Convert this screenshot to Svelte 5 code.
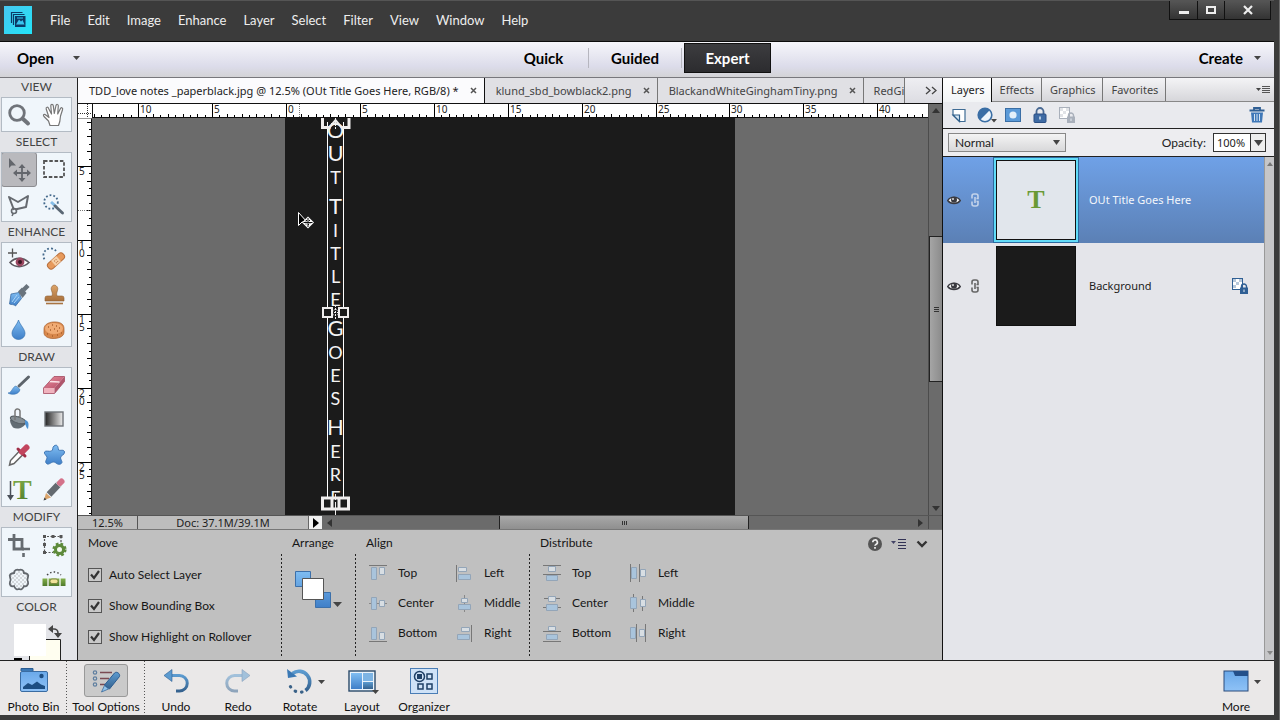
<script>
  const menus = ['File', 'Edit', 'Image', 'Enhance', 'Layer', 'Select', 'Filter', 'View', 'Window', 'Help'];

  const toolGroups = [
    { name: 'VIEW', tools: ['zoom', 'hand'] },
    { name: 'SELECT', tools: ['move', 'marquee', 'lasso', 'wand'] },
    { name: 'ENHANCE', tools: ['redeye', 'heal', 'smart', 'stamp', 'blur', 'sponge'] },
    { name: 'DRAW', tools: ['brush', 'eraser', 'bucket', 'gradient', 'dropper', 'shape', 'type', 'pencil'] },
    { name: 'MODIFY', tools: ['crop', 'recompose', 'cookie', 'straighten'] }
  ];
  let activeTool = $state('move');

  const tabs = [
    'TDD_love notes _paperblack.jpg @ 12.5% (OUt Title Goes Here, RGB/8) *',
    'klund_sbd_bowblack2.png',
    'BlackandWhiteGinghamTiny.png'
  ];
  const panelTabs = ['Layers', 'Effects', 'Graphics', 'Favorites'];

  // Rulers: one tick per half unit, a long one with a label every five units.
  const step = 7.39;
  const originX = 193;
  const originY = -27;
  const hTicks = [];
  for (let i = -26; i <= 300; i++) hTicks.push({ i, p: Math.round(originX + i * step) });
  const vTicks = [];
  for (let i = 4; i <= 200; i++) vTicks.push({ i, p: Math.round(originY + i * step) });
  const hLabels = hTicks.filter((t) => t.i % 10 === 0 && t.i > -26);
  const vLabels = vTicks.filter((t) => t.i % 10 === 0);

  // Title runs down the page; capitals are larger than the small capitals.
  const letters = [];
  let baseline = 20;
  for (const ch of 'OUt Title Goes Here') {
    if (ch === ' ') {
      baseline += 7;
      continue;
    }
    letters.push({ ch: ch.toUpperCase(), y: baseline, big: ch !== ch.toLowerCase() });
    baseline += 23;
  }

  const checks = ['Auto Select Layer', 'Show Bounding Box', 'Show Highlight on Rollover'];
  const align = [
    ['Top', 'a-top'], ['Left', 'a-left'],
    ['Center', 'a-center'], ['Middle', 'a-middle'],
    ['Bottom', 'a-bottom'], ['Right', 'a-right']
  ];
  const distribute = [
    ['Top', 'd-top'], ['Left', 'd-left'],
    ['Center', 'd-center'], ['Middle', 'd-middle'],
    ['Bottom', 'd-bottom'], ['Right', 'd-right']
  ];
</script>

<svg class="defs" aria-hidden="true">
  <defs>
    <linearGradient id="blue" x1="0" y1="0" x2="0" y2="1"><stop offset="0" stop-color="#7fbdf2" /><stop offset="1" stop-color="#3f7fc8" /></linearGradient>
    <linearGradient id="sky" x1="0" y1="0" x2="0" y2="1"><stop offset="0" stop-color="#6aa9ea" /><stop offset="1" stop-color="#8fc2f6" /></linearGradient>
    <linearGradient id="steel" x1="0" y1="0" x2="0" y2="1"><stop offset="0" stop-color="#5c9bd0" /><stop offset="1" stop-color="#35628f" /></linearGradient>
    <linearGradient id="fade" x1="0" y1="0" x2="1" y2="0"><stop offset="0" stop-color="#222" /><stop offset="1" stop-color="#eee" /></linearGradient>
    <linearGradient id="tan" x1="0" y1="0" x2="0" y2="1"><stop offset="0" stop-color="#dda468" /><stop offset="1" stop-color="#a8703c" /></linearGradient>
    <linearGradient id="pink" x1="0" y1="0" x2="1" y2="1"><stop offset="0" stop-color="#e68c9c" /><stop offset="1" stop-color="#b84f68" /></linearGradient>
    <linearGradient id="green" x1="0" y1="0" x2="0" y2="1"><stop offset="0" stop-color="#83b04a" /><stop offset="1" stop-color="#4f7a2c" /></linearGradient>
    <linearGradient id="logo" x1="0" y1="0" x2="1" y2="1"><stop offset="0" stop-color="#48c8f0" /><stop offset="1" stop-color="#22e4f8" /></linearGradient>
    <pattern id="checker" width="4" height="4" patternUnits="userSpaceOnUse"><path d="M0 0h2v2h-2zM2 2h2v2h-2z" fill="#d4d8dc" /></pattern>
  </defs>
</svg>

{#snippet toolIcon(name)}
  <svg width="26" height="26" viewBox="0 0 26 26" fill="none" aria-hidden="true">
    {#if name === 'zoom'}
      <circle cx="11" cy="11" r="7.300" stroke="#70747a" stroke-width="2.800" />
      <path d="M16.500 16.500L22 21.500" stroke="#70747a" stroke-width="4" stroke-linecap="round" />
    {:else if name === 'hand'}
      <path d="M9 23.500L7.500 19L3 14.500C1.500 12.500 3.500 11.800 4.800 13L8 15.500L5.200 7C4.800 5 7 4.500 7.600 6.500L10.500 12L9.800 3.800C9.800 1.800 12 1.800 12.300 3.800L13.300 11.500L15 3.500C15.500 1.800 17.500 2.300 17.300 4L16.700 12L19.500 6.500C20.500 5 22.200 6 21.500 7.800L19.500 14L18.800 19.500L17.500 23.500Z" fill="#fff" stroke="#777" stroke-width="1.200" stroke-linejoin="round" />
    {:else if name === 'move'}
      <path d="M3 1v10l2.500-2.500 4.500 0z" fill="#63666c" />
      <path d="M16 9v14M9 16h14" stroke="#63666c" stroke-width="1.800" />
      <path d="M16 7l3.500 4h-7zM16 25l3.500-4h-7zM7 16l4-3.500v7zM25 16l-4-3.500v7z" fill="#63666c" />
    {:else if name === 'marquee'}
      <rect x="3" y="4" width="20" height="16" stroke="#555" stroke-width="1.800" stroke-dasharray="3.500 1.800" />
    {:else if name === 'lasso'}
      <path d="M8 18L3 5l9 5 10-6-2 11-11 2.500" stroke="#666a70" stroke-width="2" stroke-linejoin="round" />
      <circle cx="8" cy="19" r="2.500" stroke="#666a70" stroke-width="1.600" />
      <path d="M7.500 21l-1.500 3" stroke="#666a70" stroke-width="1.600" />
    {:else if name === 'wand'}
      <circle cx="10" cy="10" r="6.800" stroke="#44698c" stroke-width="1.800" stroke-dasharray="1.800 2" />
      <path d="M10 10L15 14.500" stroke="#85bde8" stroke-width="3" />
      <path d="M14 14L21.500 21" stroke="#5a6774" stroke-width="3" stroke-linecap="round" />
    {:else if name === 'redeye'}
      <path d="M2 6h9M6.500 1.500v9" stroke="#555" stroke-width="1.300" />
      <path d="M4 15.500C9 10 17 10 23 15.500C17 21 9 21 4 15.500z" fill="#fff" stroke="#5d5a60" stroke-width="1.600" />
      <circle cx="14" cy="15" r="4.400" fill="#9a4761" /><circle cx="14" cy="15" r="2" fill="#3b1824" />
    {:else if name === 'heal'}
      <path d="M15 4A7 7 0 1 0 4 13" stroke="#44698c" stroke-width="1.800" stroke-dasharray="1.800 2" />
      <g transform="rotate(-42 15 14)"><rect x="5" y="10.500" width="20" height="7" rx="3" fill="#e79a5c" stroke="#b86f3c" /><rect x="11.500" y="10.500" width="7" height="7" fill="#f6cfa6" /><path d="M13.500 13h3M13.500 15.500h3" stroke="#b86f3c" stroke-dasharray="1 1" /></g>
    {:else if name === 'smart'}
      <path d="M5 12L13 10.500L15.500 16.500L9.500 24C8 22 5.500 23 3.500 22z" fill="url(#blue)" stroke="#2f6299" stroke-width=".7" />
      <path d="M6 20l5-7M8 21l5-6" stroke="#a9d3f6" />
      <path d="M12 9.500L16 5.500L20.500 11L16.500 16z" fill="#69737c" /><path d="M17.500 8L22 3.500" stroke="#69737c" stroke-width="4.500" />
    {:else if name === 'stamp'}
      <path d="M13 3a4 4 0 0 1 3.500 5.500C15.500 11 15.500 12 16 14H21a2 2 0 0 1 2 2v3H4v-3a2 2 0 0 1 2-2h5c.5-2 .5-3-.5-5.500A4 4 0 0 1 13 3z" fill="url(#tan)" stroke="#8f6034" stroke-width=".6" /><path d="M5 21.500h17" stroke="#a87442" stroke-width="1.600" />
    {:else if name === 'blur'}
      <path d="M12.500 3C14 8 19 12 19 16.500a6.500 6 0 0 1-13 0C6 12 11 8 12.500 3z" fill="url(#blue)" stroke="#3773b0" stroke-width=".7" />
    {:else if name === 'sponge'}
      <path d="M3 12C3 7 9 4.500 15 5s8 3 8 7v3c0 5-6 6.500-11 6.500S3 19 3 16z" fill="#d8884c" stroke="#a9602e" stroke-width=".7" />
      <ellipse cx="13" cy="11.500" rx="9" ry="5.500" fill="#f0ab74" /><path d="M7 10h1M11 8h1M15 9h1M18 11h1M9 13h1M13 12h1M16 14h1M6 17h1M11 19h1M16 18h1M20 16h1" stroke="#a9602e" stroke-width="1.400" />
    {:else if name === 'brush'}
      <path d="M13 14L22.500 5" stroke="#5d646b" stroke-width="3" stroke-linecap="round" />
      <path d="M2 21c4 0 4-6 8-7l4 3.500c-1 5-8 6-12 3.500z" fill="url(#blue)" stroke="#3773b0" stroke-width=".6" />
    {:else if name === 'eraser'}
      <path d="M2.500 16L13 4.500h10.500L13.500 16z" fill="url(#pink)" /><path d="M2.500 16h11v5.500h-11z" fill="#f0b3be" /><path d="M13.500 16l10-11.500v5L13.500 21.500z" fill="#b0566c" /><path d="M8.500 9.500l10 .5" stroke="#fbe3e7" stroke-width="1.600" /><path d="M2.500 16L13 4.500h10.500v5L13.500 21.500h-11z" stroke="#a34b61" stroke-width=".8" />
    {:else if name === 'bucket'}
      <path d="M4 13L13 9L20 16C18 21 11 23 7 20.500C5 18 4 15 4 13z" fill="#626c73" /><ellipse cx="12" cy="13" rx="8" ry="3" transform="rotate(18 12 13)" fill="#858e94" stroke="#555d63" />
      <path d="M9 13V5a2.500 2.500 0 0 1 5-1v7" stroke="#777" stroke-width="1.500" /><path d="M19 13c4 1 4 4 3 9-2-1-2-4-3-5z" fill="#4f93d2" />
    {:else if name === 'gradient'}
      <rect x="4" y="5" width="18" height="14" fill="url(#fade)" stroke="#6e7378" stroke-width="1.400" />
    {:else if name === 'dropper'}
      <path d="M13.500 9L4.500 18.500L3.500 23L8 21.500L17 12.500z" fill="#fff" stroke="#666" stroke-width="1.500" />
      <path d="M12 7L19 14" stroke="#a02f47" stroke-width="3" stroke-linecap="round" /><path d="M16 10L20.500 5.500" stroke="#c2455e" stroke-width="6" stroke-linecap="round" />
    {:else if name === 'shape'}
      <path d="M13 4c3-2 4 0 4.500 4 2 1 5.500-1 6 2s-4.500 3.500-4 6 3 4.500 0 6-4.500-2-7-2-5 3.500-7 1.500.5-4 .5-6-3.500-3.500-2.500-5.500 5 0 7-1 .5-3.500 2.500-5z" fill="url(#blue)" stroke="#4076b4" />
    {:else if name === 'type'}
      <path d="M4.500 4v16" stroke="#4a4f58" stroke-width="1.500" /><path d="M1 18l3.500 5.500L8 18z" fill="#4a4f58" />
      <text x="7" y="22" class="glyph" fill="url(#green)" font-size="28">T</text>
    {:else if name === 'pencil'}
      <path d="M3 23l2-7 5 4.500z" fill="#dba56c" /><path d="M2.500 23.500l1-3 2 2z" fill="#444" /><path d="M8 17.500L17 8" stroke="#646a70" stroke-width="6.500" /><path d="M17 8l1.500-1.500" stroke="#b7bcc0" stroke-width="6.500" /><path d="M19 6l1.500-1.500" stroke="#d4728a" stroke-width="6" stroke-linecap="round" />
    {:else if name === 'crop'}
      <path d="M8 2v15h10M2 7.500h14v10" stroke="#666b70" stroke-width="2.800" /><path d="M16 17h8M17.500 21v4" stroke="#666b70" stroke-width="2.600" />
    {:else if name === 'recompose'}
      <path d="M20 10V4.500H3.500v16H12" stroke="#555" stroke-width="1.200" stroke-dasharray="2 1.500" /><path d="M2 3h3v3H2zM10.500 3h3v3h-3zM18.500 3h3v3h-3zM2 11h3v3H2zM2 19h3v3H2z" fill="#555" />
      <circle cx="18.500" cy="17.500" r="5.800" stroke="#5d8a3a" stroke-width="2.600" stroke-dasharray="2.600 2" /><circle cx="18.500" cy="17.500" r="4" fill="#f4faf0" stroke="#5d8a3a" stroke-width="3" />
    {:else if name === 'cookie'}
      <path d="M13 3c2-1 5 0 5 3 3 0 5 2 4 4-1 2-1 3 0 5 1 3-2 5-4 4-1 3-3 4-5 3-2 1-4 0-5-3-3 1-5-1-4-4 1-2 1-3 0-5-1-2 1-4 4-4 0-3 3-4 5-3z" fill="url(#checker)" stroke="#62676d" stroke-width="1.800" />
    {:else if name === 'straighten'}
      <path d="M6 8q7-6 14 0" stroke="#444" stroke-width="1.500" stroke-dasharray="1.500 2.200" />
      <rect x="1.500" y="11.500" width="23" height="7.500" fill="url(#green)" /><path d="M7 11v8M19 11v8" stroke="#eef3ea" stroke-width="1.400" /><rect x="9" y="12" width="8" height="4.500" rx="2" fill="#f2e39a" stroke="#7d8a3f" />
    {/if}
  </svg>
{/snippet}

{#snippet alignIcon(name)}
  <svg width="20" height="20" viewBox="0 0 20 20" fill="#a9c4dc" stroke="#93a5b8" aria-hidden="true">
    {#if name === 'a-top'}
      <path d="M1 2.500h18" stroke="#777" /><path d="M3.500 4.500h5v12h-5z" /><path d="M11.500 4.500h5v7h-5z" fill="#d8dee3" />
    {:else if name === 'a-center'}
      <path d="M1 10.500h18" stroke="#888" /><path d="M3.500 4.500h5v12h-5z" /><path d="M11.500 7.500h5v6h-5z" fill="#d8dee3" />
    {:else if name === 'a-bottom'}
      <path d="M1 18.500h18" stroke="#777" /><path d="M3.500 4.500h5v12h-5z" /><path d="M11.500 9.500h5v7h-5z" fill="#d8dee3" />
    {:else if name === 'a-left'}
      <path d="M2.500 2v17" stroke="#777" /><path d="M4.500 11.500h12v5h-12z" /><path d="M4.500 4.500h8v4h-8z" fill="#d8dee3" />
    {:else if name === 'a-middle'}
      <path d="M10.500 2v17" stroke="#888" /><path d="M4.500 11.500h12v5h-12z" /><path d="M7.500 5.500h6v4h-6z" fill="#d8dee3" />
    {:else if name === 'a-right'}
      <path d="M17.500 2v17" stroke="#777" /><path d="M3.500 11.500h12v5h-12z" /><path d="M7.500 4.500h8v4h-8z" fill="#d8dee3" />
    {:else if name === 'd-top'}
      <path d="M1 2.500h18M1 11.500h18" stroke="#777" /><path d="M4.500 12.500h11v5h-11z" /><path d="M6.500 3.500h7v5h-7z" fill="#d8dee3" />
    {:else if name === 'd-center'}
      <path d="M2 5.500h16M1 14.500h18" stroke="#777" /><path d="M4.500 11.500h11v6h-11z" /><path d="M6.500 3.500h7v5h-7z" fill="#d8dee3" />
    {:else if name === 'd-bottom'}
      <path d="M1 8.500h18M1 18.500h18" stroke="#777" /><path d="M4.500 11.500h11v5h-11z" /><path d="M6.500 3.500h7v4h-7z" fill="#d8dee3" />
    {:else if name === 'd-left'}
      <path d="M2.500 1v18M11.500 1v18" stroke="#777" /><path d="M3.500 4.500h5v11h-5z" /><path d="M12.500 6.500h5v7h-5z" fill="#d8dee3" />
    {:else if name === 'd-middle'}
      <path d="M5.500 1v18M14.500 3v15" stroke="#777" /><path d="M2.500 4.500h6v11h-6z" /><path d="M12.500 6.500h5v7h-5z" fill="#d8dee3" />
    {:else}
      <path d="M8.500 1v18M17.500 1v18" stroke="#777" /><path d="M2.500 4.500h5v11h-5z" /><path d="M11.500 6.500h5v7h-5z" fill="#d8dee3" />
    {/if}
  </svg>
{/snippet}

{#snippet caret()}
  <svg class="caret" width="7" height="4" viewBox="0 0 7 4" aria-hidden="true"><path d="M0 0h7L3.500 4z" fill="#444" /></svg>
{/snippet}

{#snippet eye()}
  <svg width="14" height="10" viewBox="0 0 14 10" aria-hidden="true"><path d="M.7 5.500C3.500 1 10.500 1 13.300 5.500C10.500 9.500 3.500 9.500.7 5.500z" fill="#f4f4f4" stroke="#3a3a40" stroke-width="1.400" /><circle cx="7" cy="4.800" r="3" fill="#3a3a40" /><circle cx="6" cy="4" r="1" fill="#ddd" /></svg>
{/snippet}

{#snippet chain()}
  <svg width="8" height="14" viewBox="0 0 8 14" fill="none" stroke="currentColor" stroke-width="1.600" aria-hidden="true"><path d="M1 5.500V3a2 2 0 0 1 2-2h2a2 2 0 0 1 2 2v2.500H5.500M1 8.500V11a2 2 0 0 0 2 2h2a2 2 0 0 0 2-2V8.500H5.500M4 4v6" /></svg>
{/snippet}

{#snippet pixelLock(tone)}
  <svg width="18" height="18" viewBox="0 0 18 18" fill="none" stroke={tone} aria-hidden="true"><rect x="1.500" y="1.500" width="10" height="11" fill="#fff" /><path d="M2 2h3v3H2zM8 2h3v3H8zM5 5h3v3H5zM2 8h3v3H2z" fill={tone} fill-opacity=".35" stroke="none" /><path d="M10.500 11v-1.500a2.500 2.500 0 0 1 5 0V11" stroke-width="1.400" /><rect x="9.500" y="11" width="7" height="5.500" fill={tone} /><path d="M13 12.500v2.500" stroke="#e8eef5" /></svg>
{/snippet}

<div class="app">
  <header class="titlebar">
    <svg class="logo" width="28" height="28" viewBox="0 0 28 28" aria-hidden="true">
      <rect width="28" height="28" fill="url(#logo)" />
      <path d="M7.500 17V6.500h11M9.500 19V8.500h11" fill="none" stroke="#0b3a66" stroke-width="1.200" />
      <rect x="11" y="10" width="10.500" height="11" fill="#0b3a66" /><path d="M12 18.500l3-5 2 2 1.500-1.500 2 4.500z" fill="#38c5ee" /><path d="M13 12h6" stroke="#38c5ee" />
    </svg>
    <nav class="menus">
      {#each menus as m}<button>{m}</button>{/each}
    </nav>
    <div class="winbtns">
      <button aria-label="Minimize"><svg width="12" height="12" viewBox="0 0 12 12"><path d="M1 7h10v3H1z" fill="#eee" /></svg></button>
      <button aria-label="Maximize"><svg width="12" height="12" viewBox="0 0 12 12"><path d="M2 3h8v6H2z" fill="none" stroke="#eee" stroke-width="2" /></svg></button>
      <button class="wide" aria-label="Close"><svg width="12" height="12" viewBox="0 0 12 12"><path d="M2 2l8 8M10 2l-8 8" stroke="#eee" stroke-width="2.200" /></svg></button>
    </div>
  </header>

  <div class="modebar">
    <button class="open">Open {@render caret()}</button>
    <div class="modes">
      <button>Quick</button>
      <button>Guided</button>
      <button class="on">Expert</button>
    </div>
    <button class="create">Create {@render caret()}</button>
  </div>

  <main>
    <aside class="tools">
      {#each toolGroups as g}
        <h2>{g.name}</h2>
        <div class="toolbox">
          {#each g.tools as t}
            <button class:on={activeTool === t} aria-label={t} onclick={() => (activeTool = t)}>{@render toolIcon(t)}</button>
          {/each}
        </div>
      {/each}
      <h2>COLOR</h2>
      <svg class="swatches" width="72" height="50" viewBox="0 0 72 50" aria-hidden="true">
        <path d="M29.500 22.500h31V50h-31z" fill="#fffef0" stroke="#222" />
        <rect x="14" y="7" width="32" height="32" fill="#fff" />
        <path d="M14 42.500h8" stroke="#000" stroke-width="3" />
        <path d="M51 12h3a4 4 0 0 1 4 4v2" fill="none" stroke="#444" stroke-width="1.600" /><path d="M48 12l5-4v8zM54 16h8l-4 5z" fill="#444" />
      </svg>
    </aside>

    <section class="center">
      <div class="tabs">
        {#each tabs as t, i}
          <div class="tab" class:on={i === 0}>
            <button class="tabname">{t}</button>
            <button class="x" aria-label="Close tab"><svg width="8" height="8" viewBox="0 0 8 8"><path d="M1 1l5 5M6 1L1 6" stroke="#555" stroke-width="1.500" /></svg></button>
          </div>
        {/each}
        <div class="tab last-tab"><button class="tabname">RedGi</button></div>
        <button class="more" aria-label="More tabs"><svg width="12" height="9" viewBox="0 0 12 9"><path d="M1 1l4 3.500L1 8M7 1l4 3.500L7 8" fill="none" stroke="#444" stroke-width="1.300" /></svg></button>
      </div>

      <div class="work">
        <svg class="corner" width="14" height="14" viewBox="0 0 14 14" aria-hidden="true"><path d="M0 9.500h13M9.500 0v13" stroke="#333" stroke-dasharray="1 1" /></svg>
        <svg class="hruler" aria-hidden="true">
          {#each hTicks as t}
            {#if t.i % 10 === 0}<rect x={t.p} y="0" width="1" height="14" />{:else}<rect x={t.p} y={t.i % 2 ? 11 : 10} width="1" height="4" />{/if}
          {/each}
          <path d="M206.500 0v14" stroke="#777" stroke-dasharray="1 1" />
          {#each hLabels as t}<text x={t.p + 2} y="9">{Math.abs(t.i / 2)}</text>{/each}
        </svg>
        <svg class="vruler" aria-hidden="true">
          {#each vTicks as t}
            {#if t.i % 10 === 0}<rect x="0" y={t.p} width="14" height="1" />{:else}<rect x={t.i % 2 ? 11 : 9} y={t.p} width="5" height="1" />{/if}
          {/each}
          <path d="M0 91.500h14" stroke="#777" stroke-dasharray="1 1" />
          {#each vLabels as t}
            {#each String(t.i / 2).split('') as d, n}<text x="1" y={t.p + 9 + n * 8}>{d}</text>{/each}
          {/each}
        </svg>
        <svg class="stage" role="img" aria-label="Document">
          <rect x="193" y="0" width="450" height="100%" fill="#1b1b1b" />
          {#each letters as l}
            <text class="letter" class:big={l.big} x="243.500" y={l.y} text-anchor="middle">{l.ch}</text>
          {/each}
          <path d="M235.500 4V386M251.500 4V386" stroke="#fff" />
          <g fill="none" stroke="#f0eeee">
            <path d="M230.500 0v9.500h8M257 0v9.500h-8" stroke-width="3" />
            <path d="M237 10l6.500-8 6.500 8" stroke-width="2" /><path d="M243.500 0v12M239 5.500h9" stroke-dasharray="2 1" />
            <path d="M231 190h9v9h-9zM247 190h9v9h-9z" fill="#1b1b1b" stroke-width="2" />
            <path d="M230.500 380h26v11h-26z" fill="#1b1b1b" stroke-width="3" />
            <path d="M243.500 187v15M239 194.500h9" stroke-dasharray="2 1" />
            <circle cx="243.500" cy="194.500" r="3" stroke-dasharray="1 1" />
            <path d="M240 379v13M247 379v13" stroke-width="3" /><path d="M243.500 376v24" stroke-dasharray="6 2" />
          </g>
          <path d="M206.500 94.500v13l3.500-3.500h5z" fill="#000" stroke="#fff" />
          <path d="M216 98.500l6 6-6 6-6-6z" fill="#fff" /><path d="M216 100v9M211.500 104.500h9" stroke="#111" /><path d="M214 102.500h4v4h-4z" fill="none" stroke="#111" stroke-dasharray="1 2" />
        </svg>
        <div class="vscroll">
          <svg width="8" height="6" viewBox="0 0 8 6"><path d="M0 5h8L4 0z" fill="#333" /></svg>
          <div class="vbefore"></div>
          <div class="vthumb"><i></i><i></i><i></i></div>
          <div class="vafter"></div>
          <svg width="8" height="6" viewBox="0 0 8 6"><path d="M0 1h8L4 6z" fill="#333" /></svg>
        </div>
      </div>

      <div class="status">
        <span class="pct">12.5%</span>
        <span class="doc">Doc: 37.1M/39.1M</span>
        <button class="play" aria-label="Status menu"><svg width="6" height="10" viewBox="0 0 6 10"><path d="M0 0v10l6-5z" /></svg></button>
        <div class="hscroll">
          <svg width="5" height="8" viewBox="0 0 5 8"><path d="M5 0v8L0 4z" fill="#333" /></svg>
          <div class="hbefore"></div>
          <div class="hthumb"><i></i><i></i><i></i></div>
          <div class="hafter"></div>
          <svg width="5" height="8" viewBox="0 0 5 8"><path d="M0 0v8l5-4z" fill="#333" /></svg>
        </div>
        <div class="gap"></div>
      </div>

      <div class="options">
        <section class="move">
          <h3>Move</h3>
          <div class="body line checks">
            {#each checks as c}<label><input type="checkbox" checked />{c}</label>{/each}
          </div>
        </section>
        <section class="arrange">
          <h3>Arrange</h3>
          <div class="body line">
            <button class="arr" aria-label="Arrange">
              <svg width="48" height="40" viewBox="0 0 48 40"><path d="M.5.500h15v15H.5zM20.500 21.500h15v15h-15z" fill="url(#blue)" stroke="#3c70aa" /><path d="M7.500 7.500h21v21h-21z" fill="#fff" stroke="#555" /><path d="M38 31h9l-4.500 5z" fill="#444" /></svg>
            </button>
          </div>
        </section>
        <section class="align">
          <h3>Align</h3>
          <div class="body line grid">
            {#each align as [l, n]}<button>{@render alignIcon(n)}{l}</button>{/each}
          </div>
        </section>
        <section class="align dist">
          <h3>Distribute</h3>
          <div class="body grid">
            {#each distribute as [l, n]}<button>{@render alignIcon(n)}{l}</button>{/each}
          </div>
        </section>
        <div class="corners">
          <button aria-label="Help"><svg width="14" height="14" viewBox="0 0 14 14"><circle cx="7" cy="7" r="7" fill="#555" /><path d="M4.800 5.300a2.300 2.300 0 1 1 3.200 2.100c-.8.400-1 .7-1 1.400M7 10v1.800" fill="none" stroke="#eee" stroke-width="1.700" /></svg></button>
          <button aria-label="Panel menu"><svg width="16" height="12" viewBox="0 0 16 12"><path d="M0 3h5L2.500 6z" fill="#446" /><path d="M7 1.500h8M7 4.500h8M7 7.500h8M7 10.500h8" stroke="#335" /></svg></button>
          <button aria-label="Collapse"><svg width="12" height="8" viewBox="0 0 12 8"><path d="M1.500 1.500L6 6l4.500-4.500" fill="none" stroke="#333" stroke-width="2.400" /></svg></button>
        </div>
      </div>
    </section>

    <aside class="panel">
      <div class="ptabs">
        {#each panelTabs as t, i}<button class:on={i === 0}>{t}</button>{/each}
        <button class="pmenu" aria-label="Panel menu"><svg width="14" height="8" viewBox="0 0 14 8"><path d="M0 2h5L2.500 5z" fill="#444" /><path d="M6 .5h8M6 2.500h8M6 4.500h8M6 6.500h8" stroke="#555" /></svg></button>
      </div>
      <div class="ptools">
        <button aria-label="New layer"><svg width="18" height="18" viewBox="0 0 18 18"><path d="M3 3.500h12v12H9.500L3 9z" fill="#fff" stroke="#3f6c95" stroke-width="1.200" /><path d="M3 9h6.500v6.500z" fill="#d9e8f5" stroke="#2f5f8a" stroke-width="1.200" /></svg></button>
        <button aria-label="Adjustment layer"><svg width="21" height="18" viewBox="0 0 21 18"><circle cx="8" cy="9" r="6.800" fill="#eef5fb" stroke="#3a6ea5" stroke-width="1.600" /><path d="M3.300 13.700A6.600 6.600 0 0 1 12.700 4.300z" fill="#3a6ea5" /><path d="M14 13h6l-3 3.500z" fill="#444" /></svg></button>
        <button aria-label="Layer mask"><svg width="18" height="18" viewBox="0 0 18 18"><rect x="1.500" y="2.500" width="15" height="13" fill="#5b9ad8" stroke="#3a6ea5" /><circle cx="9" cy="9" r="3.600" fill="#e4f0fa" /></svg></button>
        <button aria-label="Lock layer"><svg width="18" height="18" viewBox="0 0 18 18"><path d="M5.500 8V5.500a3.500 3.500 0 0 1 7 0V8" fill="none" stroke="#4a6a94" stroke-width="1.800" /><rect x="3" y="8" width="12" height="8.500" rx="1" fill="#3f6ba4" stroke="#2b4f84" /><path d="M9 10.500v3" stroke="#cfe0f0" stroke-width="1.600" /></svg></button>
        <button aria-label="Lock transparent pixels">{@render pixelLock('#a9b0bb')}</button>
        <button class="trash" aria-label="Delete layer"><svg width="18" height="18" viewBox="0 0 18 18"><path d="M1.500 4.500h15M6 3.500V2h6v1.500" fill="none" stroke="#2f5f94" stroke-width="1.800" /><path d="M3 6.500h12l-1 10H4z" fill="#3f78b8" /><path d="M6.500 8v7M9 8v7M11.500 8v7" stroke="#d5e4f3" /></svg></button>
      </div>
      <div class="blend">
        <select aria-label="Blend mode"><option>Normal</option><option>Multiply</option></select>
        <label for="opacity">Opacity:</label>
        <div class="combo"><input id="opacity" value="100%" /><button aria-label="Opacity slider"><svg width="9" height="6" viewBox="0 0 9 6"><path d="M0 0h9L4.500 6z" fill="#444" /></svg></button></div>
      </div>
      <div class="layers">
        <div class="list">
          <div class="layer on">
            {@render eye()}{@render chain()}
            <div class="thumb"><span>T</span></div>
            <span class="lname">OUt Title Goes Here</span>
          </div>
          <div class="layer">
            {@render eye()}{@render chain()}
            <div class="thumb dark"></div>
            <span class="lname">Background</span>
            {@render pixelLock('#2f5f94')}
          </div>
        </div>
        <div class="pscroll">
          <svg width="6" height="4" viewBox="0 0 6 4"><path d="M0 4h6L3 0z" fill="#777" /></svg>
          <svg width="6" height="4" viewBox="0 0 6 4"><path d="M0 0h6L3 4z" fill="#888" /></svg>
        </div>
      </div>
    </aside>
  </main>

  <footer>
    <button class="sep bin"><span class="ico"><svg width="30" height="28" viewBox="0 0 30 28"><path d="M2 4V1.500h12V4" fill="#3c78b4" stroke="#2b5d92" /><rect x="1.500" y="4.500" width="27" height="20" rx="1.500" fill="url(#sky)" stroke="#3a6ca2" /><path d="M4 22v-2l5-4 4 2 5-3.500 4 3 4 1.500v3z" fill="#1d4e82" /><circle cx="22.500" cy="9" r="2.200" fill="#1d4e82" /></svg></span>Photo Bin</button>
    <button class="sep opts"><span class="ico on"><svg width="30" height="28" viewBox="0 0 30 28"><path d="M9 5.500h12M9 11.500h9M9 17.500h5" stroke="#7a4a52" stroke-width="1.400" /><g fill="none" stroke="#5f7fa0" stroke-width="1.200"><circle cx="4" cy="5.500" r="1.700" /><circle cx="4" cy="11.500" r="1.700" /><circle cx="4" cy="17.500" r="1.700" /></g><path d="M13.500 18L23.500 6c2-2 6 .5 5 3.500L18.500 22z" fill="url(#steel)" stroke="#2b5d92" /><path d="M13.500 18.500l4 3.500-7 3z" fill="#8fc3ec" stroke="#2b5d92" stroke-width=".7" /></svg></span>Tool Options</button>
    <button><span class="ico"><svg width="28" height="28" viewBox="0 0 28 28"><path d="M8 8.500h9.500a7.500 7.500 0 0 1 0 15.500H14" fill="none" stroke="url(#steel)" stroke-width="3" /><path d="M2 8.500l8-6v12z" fill="#5c9bd0" stroke="#2b5d92" stroke-width=".6" /></svg></span>Undo</button>
    <button><span class="ico faded"><svg width="28" height="28" viewBox="0 0 28 28"><path d="M20 8.500h-9.500a7.500 7.500 0 0 0 0 15.500H14" fill="none" stroke="url(#steel)" stroke-width="3" /><path d="M26 8.500l-8-6v12z" fill="#5c9bd0" stroke="#2b5d92" stroke-width=".6" /></svg></span>Redo</button>
    <button><span class="ico"><svg width="28" height="28" viewBox="0 0 28 28"><path d="M6.500 6.500A10.500 10.500 0 1 1 19.500 23.500" fill="none" stroke="url(#steel)" stroke-width="3.600" /><path d="M1 2l1 9 9-1.500z" fill="#3a78b4" /><path d="M16 25A11 11 0 0 1 3 14" fill="none" stroke="#3b6288" stroke-width="3.200" stroke-linecap="round" stroke-dasharray="0.5 6" /></svg><span class="side">{@render caret()}</span></span>Rotate</button>
    <button><span class="ico"><svg width="28" height="28" viewBox="0 0 28 28"><rect x="1" y="4" width="26" height="20" fill="#eaf3fb" stroke="#2b4a6a" stroke-width="1.400" /><path d="M3 6h11v16H3z" fill="url(#blue)" /><path d="M15 6h10v8H15z" fill="#7db4e4" /><path d="M15 15h10v7H15z" fill="url(#steel)" /></svg><span class="under">{@render caret()}</span></span>Layout</button>
    <button><span class="ico"><svg width="28" height="28" viewBox="0 0 28 28"><rect x=".5" y="1.500" width="27" height="25" fill="#cfe2f7" stroke="#4a7db5" /><g fill="none" stroke="#1e3f66" stroke-width="1.500"><circle cx="9.500" cy="9.500" r="5" /><rect x="17" y="7" width="5" height="5" /><rect x="8" y="17" width="5" height="5" /><rect x="17" y="17" width="5" height="5" /></g><path d="M7 7h5v5H7z" fill="#1e3f66" /></svg></span>Organizer</button>
    <button class="last"><span class="ico"><svg width="26" height="28" viewBox="0 0 26 28"><rect x="1" y="4" width="24" height="20" fill="url(#sky)" stroke="#2b4a7a" /><path d="M10 4h15v5H12z" fill="#24508a" /></svg><span class="side">{@render caret()}</span></span>More</button>
  </footer>
</div>

<style>
  :global(body) { background: #3b3b3b; }
  * { box-sizing: border-box; }
  button { appearance: none; border: 0; background: none; padding: 0; margin: 0; font: inherit; color: inherit; cursor: default; white-space: nowrap; }
  svg { display: block; flex: none; }
  h2, h3 { margin: 0; font-weight: 400; }
  .defs { position: absolute; width: 0; height: 0; }
  .glyph { font-family: 'Liberation Serif', serif; font-weight: 700; }

  .app { height: 100vh; min-height: 600px; display: flex; flex-direction: column; padding: 0 5px 5px 0; border-right: 1px solid #6d6d6d; background: #3b3b3b; color: #1c1c1c; font: 12px/16px Lato, 'Open Sans', sans-serif; overflow: hidden; }

  .titlebar { height: 42px; flex: none; display: flex; align-items: center; padding: 0 0 2px 4px; border-bottom: 1px solid #0c0c0c; border-top: 1px solid #555; color: #eee; }
  .logo { margin-right: 9px; }
  .menus { display: flex; flex: 1; font-size: 13px; }
  .menus button { padding: 0 8px 0 9px; }
  .winbtns { display: flex; align-self: flex-start; margin-right: 3px; border: 1px solid #111; border-top: 0; background: linear-gradient(#555, #333); }
  .winbtns button { width: 27px; height: 18px; display: grid; place-items: center; border-left: 1px solid #111; }
  .winbtns button:first-child { border-left: 0; }
  .winbtns .wide { width: 46px; }

  .modebar { height: 36px; flex: none; display: grid; grid-template-columns: 1fr auto 1fr; align-items: center; background: linear-gradient(#f6f6fb, #dcdcea 70%, #d3d3d6); border-bottom: 1px solid #77777c; padding: 0 13px 4px 17px; font-weight: 700; font-size: 15px; color: #000; }
  .modebar > button { display: flex; align-items: center; }
  .open { justify-self: start; gap: 19px; }
  .create { justify-self: end; gap: 11px; }
  .modes { display: flex; align-items: center; margin-right: 8px; }
  .modes button { height: 30px; width: 93px; border-right: 1px solid #b6b6bf; }
  .modes button:first-child { width: 90px; height: 20px; }
  .modes button:nth-child(2) { height: 20px; margin-right: 2px; }
  .modes .on { width: 87px; border: 1px solid #111; background: linear-gradient(#3c3c3f, #2c2c2f); color: #fff; }

  main { flex: 1; min-height: 0; display: flex; }

  .tools { width: 78px; flex: none; overflow: hidden; background: #e3e4e8; border-right: 1px solid #222; }
  .tools h2 { height: 20px; padding-right: 4px; line-height: 19px; font-size: 12px; text-align: center; color: #444; }
  .tools h2:first-child { height: 19px; line-height: 18px; }
  .toolbox { width: 71px; margin-left: 1px; display: grid; grid-template-columns: 1fr 1fr; grid-auto-rows: 35px; background: #f0f6fb; outline: 1px solid #b3bbc4; outline-offset: -1px; }
  .toolbox button { display: grid; place-items: center; border-radius: 3px; }
  .toolbox .on { background: #b9b9bd; border: 1px solid #8c8c90; }

  .center { flex: 1; min-width: 0; display: flex; flex-direction: column; }
  .tabs { height: 26px; flex: none; display: flex; border-bottom: 1px solid #111; background: linear-gradient(#eeeef2, #dcdce2); font: 11px/16px 'Noto Sans', 'Open Sans', sans-serif; }
  .tab { display: flex; align-items: center; gap: 11px; padding: 0 6px 0 11px; border-right: 1px solid #777; background: #e0e0e4; color: #444; flex: none; }
  .tab.on { background: #fbfbfd; color: #222; border-right-color: #111; }
  .tab.last-tab { padding: 0 0 0 10px; }
  .more { margin-left: auto; padding: 0 5px; }

  .work { flex: 1; min-height: 0; display: grid; grid-template: 14px 1fr / 14px 1fr 14px; background: #6b6b6b; }
  .corner { background: #fff; }
  .hruler { width: 100%; height: 14px; background: #fff; border-bottom: 1px solid #111; border-left: 1px solid #111; overflow: hidden; }
  .vruler { grid-row: 2; grid-column: 1; width: 14px; height: 100%; background: #fff; border-right: 1px solid #111; border-top: 1px solid #999; overflow: hidden; }
  .hruler text, .vruler text { font: 10px 'Noto Sans', 'Open Sans', sans-serif; fill: #222; }
  .stage { grid-row: 2; grid-column: 2; width: 100%; height: 100%; overflow: hidden; }
  .letter { font-size: 18px; fill: #f4f4f4; }
  .letter.big { font-size: 22px; }
  .vscroll { grid-row: 1 / 3; grid-column: 3; display: flex; flex-direction: column; align-items: center; padding: 4px 0; border-left: 1px solid #4c4c4c; background: #6b6b6b; }
  .vbefore { flex: 123; }
  .vafter { flex: 124; }
  .vthumb { flex: 144; width: 100%; display: flex; flex-direction: column; align-items: center; justify-content: center; gap: 1px; border: 1px solid #222; border-right: 0; background: linear-gradient(90deg, #a5a5a5, #8b8b8b); }
  .vthumb i { width: 5px; height: 1px; background: #333; }

  .status { height: 15px; flex: none; display: flex; background: #bdbdbd; border-top: 1px solid #555; border-bottom: 1px solid #777; font: 11px/14px 'Noto Sans', 'Open Sans', sans-serif; }
  .pct { width: 60px; text-align: center; border-right: 1px solid #555; }
  .doc { width: 170px; text-align: center; line-height: 13px; }
  .play { width: 14px; display: grid; place-items: center; background: #f2f2f2; border-left: 1px solid #666; }
  .hscroll { flex: 1; display: flex; align-items: center; padding: 0 5px; background: #6b6b6b; }
  .hbefore { flex: 168; }
  .hafter { flex: 170; }
  .hthumb { flex: 249; height: 100%; display: flex; align-items: center; justify-content: center; gap: 1px; border: 1px solid #222; border-width: 0 1px; background: linear-gradient(#a8a8a8, #8f8f8f); }
  .hthumb i { width: 1px; height: 4px; background: #333; }
  .gap { width: 14px; background: #6b6b6b; border-left: 1px solid #4c4c4c; }

  .options { height: 130px; flex: none; display: flex; background: #c0c0c0; color: #161616; }
  .options section { display: flex; flex-direction: column; padding-bottom: 3px; }
  .options h3 { height: 24px; padding: 2px 0 0 10px; font-size: 12px; line-height: 22px; }
  .body { flex: 1; padding: 4px 0 0 10px; }
  .line { background: repeating-linear-gradient(#222 0 2px, transparent 2px 4px) right / 1px 100% no-repeat; }
  .move { width: 204px; }
  .arrange { width: 74px; }
  .align { width: 174px; }
  .dist { width: 200px; }
  .checks label { height: 31px; display: flex; align-items: center; gap: 7px; padding-top: 3px; }
  .checks input { appearance: none; width: 14px; height: 14px; margin: 0; border: 1px solid #555; background: #c9c9c9 url("data:image/svg+xml,%3Csvg xmlns='http://www.w3.org/2000/svg' viewBox='0 0 12 12'%3E%3Cpath d='M2 5.500l3 3.500 5-7' fill='none' stroke='%23333' stroke-width='2.200'/%3E%3C/svg%3E"); }
  .arr { margin: 13px 0 0 3px; }
  .grid { display: grid; grid-template-columns: 86px 1fr; grid-template-rows: repeat(3, 30px); padding-left: 12px; }
  .grid button { display: flex; align-items: center; gap: 10px; }
  .corners { margin-left: auto; height: 28px; display: flex; align-items: center; gap: 9px; padding-right: 14px; }

  .panel { width: 332px; flex: none; display: flex; flex-direction: column; border-left: 1px solid #111; background: #e4e5ea; }
  .ptabs { height: 24px; flex: none; display: flex; background: linear-gradient(#f4f4f6, #d6d6da); border-bottom: 1px solid #888; color: #444; font: 11px/16px 'Noto Sans', 'Open Sans', sans-serif; }
  .ptabs button { padding: 0 7px 0 8px; border-right: 1px solid #777; }
  .ptabs .on { margin-bottom: -1px; padding: 0 6px 0 8px; background: linear-gradient(#fff, #f2f4f6); color: #222; border-color: #111; }
  .ptabs .pmenu { margin-left: auto; border: 0; padding: 0 4px; }
  .ptools { height: 27px; flex: none; display: flex; align-items: center; gap: 9px; padding: 0 8px 0 7px; border-bottom: 1px solid #222; background: #e9eaee; }
  .ptools button { width: 18px; height: 18px; }
  .ptools .trash { margin-left: auto; }
  .blend { height: 28px; flex: none; display: flex; align-items: center; padding: 0 8px 0 5px; border-bottom: 1px solid #222; background: #ededf0; color: #222; }
  select { appearance: none; width: 118px; height: 19px; padding: 0 6px; border: 1px solid #888; border-radius: 0; color: #222; font: inherit; background: url("data:image/svg+xml,%3Csvg xmlns='http://www.w3.org/2000/svg' width='7' height='5'%3E%3Cpath d='M0 0h7L3.500 5z' fill='%23444'/%3E%3C/svg%3E") no-repeat right 5px center, linear-gradient(#f4f4f4, #d8d8da); }
  .blend label { margin-left: auto; margin-right: 7px; }
  .combo { display: flex; height: 19px; border: 1px solid #333; background: #fff; }
  .combo input { width: 36px; border: 0; padding: 0 0 0 3px; font: 11px 'Noto Sans', 'Open Sans', sans-serif; color: #222; background: none; }
  .combo button { width: 15px; display: grid; place-items: center; border-left: 1px solid #333; background: #eee; }
  .layers { flex: 1; min-height: 0; display: flex; }
  .list { flex: 1; }
  .layer { height: 86px; display: flex; align-items: center; padding: 0 15px 0 4px; }
  .layer.on { background: linear-gradient(#6fa1e7, #5b80b5); color: #f4f7fb; }
  .layer > :global(svg:nth-of-type(2)) { margin: 0 17px 0 10px; color: #666; }
  .layer.on > :global(svg:nth-of-type(2)) { color: #c3d3ea; }
  .thumb { width: 80px; height: 80px; flex: none; display: grid; place-items: center; border: 1px solid #111; background: #e1e6ec; }
  .on .thumb { box-shadow: 0 0 0 2px #62dcf8, 0 0 0 3px #2c6aa0; }
  .thumb span { font: 700 26px/30px 'Liberation Serif', serif; color: #6a9a35; }
  .thumb.dark { background: #1b1b1b; }
  .lname { flex: 1; margin-left: 13px; font: 11px/16px 'Noto Sans', 'Open Sans', sans-serif; }
  .pscroll { width: 10px; display: flex; flex-direction: column; justify-content: space-between; align-items: center; padding: 5px 0; background: #c6c6c8; border-left: 1px solid #999; }

  footer { height: 55px; flex: none; display: flex; border-top: 1px solid #222; background: #eae8e8; color: #111; }
  footer button { width: 62px; display: flex; flex-direction: column; align-items: center; }
  .ico { position: relative; width: 44px; height: 36px; margin: 3px 0 2px; display: grid; place-items: center; border: 1px solid transparent; border-radius: 3px; }
  .ico.on { background: #cacaca; border-color: #999; }
  .faded { opacity: .5; }
  .sep { background: repeating-linear-gradient(#555 0 1px, transparent 1px 3px) right / 1px 100% no-repeat; }
  footer .bin { width: 67px; }
  footer .opts { width: 78px; }
  .side { position: absolute; right: -4px; top: 15px; }
  .under { position: absolute; right: 4px; bottom: 2px; }
  footer .last { margin-left: auto; margin-right: 7px; }
</style>
